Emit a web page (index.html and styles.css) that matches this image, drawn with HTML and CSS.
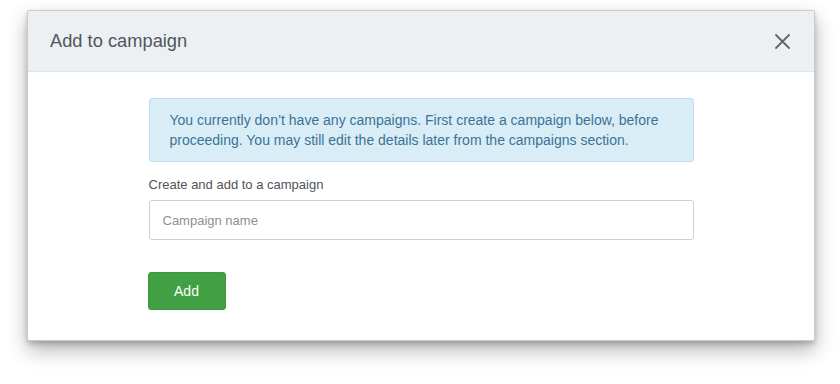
FILE: index.html
```html
<!DOCTYPE html>
<html>
<head>
<meta charset="utf-8">
<link rel="stylesheet" href="styles.css">
</head>
<body>
<div class="stage">
  <div class="modal">
    <div class="modal-header">
      <h2 class="modal-title">Add to campaign</h2>
      <button class="close" aria-label="Close">
        <svg width="15" height="15" viewBox="0 0 15 15"><path d="M1 1L14 14M14 1L1 14" stroke="#5f666d" stroke-width="1.8" stroke-linecap="round" fill="none"/></svg>
      </button>
    </div>
    <div class="modal-body">
      <div class="content">
        <div class="alert">You currently don’t have any campaigns. First create a campaign below, before proceeding. You may still edit the details later from the campaigns section.</div>
        <label class="label">Create and add to a campaign</label>
        <input class="input" type="text" placeholder="Campaign name">
        <button class="btn">Add</button>
      </div>
    </div>
  </div>
</div>
</body>
</html>
```
FILE: styles.css
```css
html, body {
  margin: 0;
  padding: 0;
  background: #ffffff;
  font-family: "Liberation Sans", Arial, sans-serif;
}
.stage {
  padding: 10px 25px 43px 27px;
}
.modal {
  width: 788px;
  height: 331px;
  box-sizing: border-box;
  background: #fff;
  border: 1px solid #c9cccf;
  border-radius: 2px;
  box-shadow: 0 9px 20px rgba(0,0,0,0.30), 0 3px 5px rgba(0,0,0,0.18);
  overflow: hidden;
}
.modal-header {
  height: 61px;
  box-sizing: border-box;
  background: #ecf0f3;
  border-bottom: 1px solid #e0e4e7;
  display: flex;
  align-items: center;
  justify-content: space-between;
  padding: 0 24px 0 22px;
}
.modal-title {
  margin: 0;
  font-weight: normal;
  font-size: 18.3px;
  color: #50565c;
}
.close {
  border: 0;
  background: none;
  padding: 0;
  width: 15px;
  height: 15px;
  display: flex;
  cursor: pointer;
}
.modal-body {
  display: flex;
  justify-content: center;
  padding-top: 26px;
}
.content {
  width: 545px;
  display: flex;
  flex-direction: column;
  align-items: flex-start;
}
.alert {
  box-sizing: border-box;
  width: 100%;
  background: #d9edf7;
  border: 1px solid #bce0ef;
  border-radius: 3px;
  color: #3a7396;
  font-size: 14px;
  line-height: 20px;
  padding: 11px 20px 11px 20px;
}
.label {
  margin-top: 15px;
  font-size: 13px;
  line-height: 16px;
  color: #4f5559;
}
.input {
  margin-top: 7px;
  box-sizing: border-box;
  width: 100%;
  height: 40px;
  border: 1px solid #ccd0d4;
  border-radius: 3px;
  padding: 0 13px;
  font-family: "Liberation Sans", Arial, sans-serif;
  font-size: 13px;
  color: #333;
}
.input::placeholder {
  color: #8a8f94;
}
.btn {
  margin-top: 32px;
  width: 78px;
  height: 38px;
  background: #41a043;
  border: 1px solid #3a9a3d;
  border-radius: 3px;
  color: #fff;
  font-family: "Liberation Sans", Arial, sans-serif;
  font-size: 14px;
  cursor: pointer;
  margin-left: -1px;
}
```
